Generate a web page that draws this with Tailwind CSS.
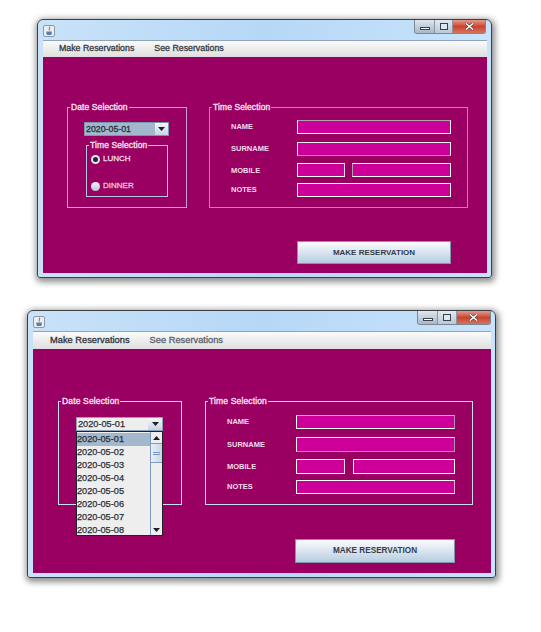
<!DOCTYPE html>
<html lang="en">
<head>
    <meta charset="UTF-8">
    <title>Reservations</title>
    <script src="https://cdn.jsdelivr.net/npm/@tailwindcss/browser@4"></script>
</head>
<body class="bg-white">
<div class="relative w-[541px] h-[632px] overflow-hidden font-['Liberation_Sans',sans-serif]">

    <!-- first window: radio panel -->
    <div class="absolute left-[37px] top-[19px] w-[455px] h-[259px] flex flex-col rounded-t-[6px] rounded-b-[3px] border border-[#3a3f44] bg-gradient-to-r from-[#c9e2f8] via-[#b6d8f7] to-[#c8e3fb] shadow-[1px_2px_6px_2px_rgba(0,0,0,0.45)]">
        <div class="h-[20px] shrink-0 flex items-center justify-between pl-[5px] pr-[5px]">
            <div class="w-[12px] h-[12px] mt-[1px] flex items-center justify-center rounded-[2px] border border-[#8d9aa6] bg-[#e8eef4]">
                <svg width="9" height="10" viewBox="0 0 10 11"><path d="M5 0.5C6 2 3.8 3 5 5" stroke="#d9641e" fill="none" stroke-width="1.2"/><path d="M1.5 6h6v2.5c0 1-1 1.5-1.5 1.5H3c-.5 0-1.5-.5-1.5-1.5z" fill="#5a7fa8"/></svg>
            </div>
            <div class="flex h-[14px] w-[72px] self-start rounded-b-[3px] border border-t-0 border-[#7b8794] overflow-hidden">
                <div class="w-[20px] flex items-center justify-center border-r border-[#8a96a2] bg-gradient-to-b from-[#dfe7ef] to-[#a9b7c6]"><div class="w-[10px] h-[3px] mt-[4px] border border-[#39424c] bg-white"></div></div>
                <div class="w-[18px] flex items-center justify-center border-r border-[#8a96a2] bg-gradient-to-b from-[#dfe9f2] to-[#b9c9d8]"><div class="w-[8px] h-[7px] border border-[#39424c] bg-[#dfe7ee]"></div></div>
                <div class="flex-1 flex items-center justify-center bg-gradient-to-b from-[#e39a8c] via-[#c9442f] to-[#d8705c]">
                    <svg width="9" height="7" viewBox="0 0 9 7"><path d="M1 .5l7 6M8 .5l-7 6" stroke="#39424c" stroke-width="2.6"/><path d="M1 .5l7 6M8 .5l-7 6" stroke="#fff" stroke-width="1.5"/></svg>
                </div>
            </div>
        </div>
        <div class="flex-1 ml-[5px] mr-[4px] mb-[4px] flex flex-col border-t border-[#8ea4ba]">
            <div class="h-[16px] shrink-0 flex items-center gap-[20px] pl-[16px] bg-gradient-to-b from-[#fbfbfb] to-[#dedede] text-[#333a44] text-[8.8px] [-webkit-text-stroke:0.3px]">
                <span>Make Reservations</span>
                <span>See Reservations</span>
            </div>
            <div class="flex-1 bg-[#990061] pt-[50px] pl-[24px]">
                <div class="flex gap-[22px] h-[101px]">
                    <div class="relative w-[120px] shrink-0 border border-[#c8a0d0]">
                        <span class="absolute left-[2px] top-[-6px] px-[1px] leading-[11px] bg-[#990061] text-[#ffe6f6] text-[8.5px] [-webkit-text-stroke:0.3px] tracking-[0.1px]">Date Selection</span>
                        <div class="ml-[16px] mt-[14px] w-[85px] h-[14px] flex border border-[#7e95ad] bg-[#a3b8cc] text-[#26303a] text-[8.8px] [-webkit-text-stroke:0.3px] leading-[12px] pl-[1px]">
                            <span class="flex-1">2020-05-01</span>
                            <div class="w-[13px] flex items-center justify-center bg-gradient-to-b from-[#f5f8fb] to-[#c6d5e3]">
                                <svg width="7" height="4" viewBox="0 0 7 4"><path d="M0 0h7L3.5 4z" fill="#1c2128"/></svg>
                            </div>
                        </div>
                        <div class="relative ml-[18px] mt-[9px] w-[82px] h-[52px] border border-[#b4c8e0] pt-[7px] pl-[4px] text-[#f2dcec] text-[8px] [-webkit-text-stroke:0.3px]">
                            <span class="absolute left-[2px] top-[-6px] px-[1px] leading-[11px] bg-[#990061] text-[#ffe6f6] text-[8.5px] [-webkit-text-stroke:0.3px] tracking-[0.1px]">Time Selection</span>
                            <div class="flex items-center gap-[3px] h-[12px]">
                                <div class="w-[9px] h-[9px] rounded-full bg-[#dfe8f0] flex items-center justify-center"><div class="w-[5px] h-[5px] rounded-full bg-[#1f2a33]"></div></div>
                                <span>LUNCH</span>
                            </div>
                            <div class="flex items-center gap-[3px] h-[12px] mt-[15px]">
                                <div class="w-[9px] h-[9px] rounded-full bg-gradient-to-b from-[#f5f8fb] to-[#b4c6d8]"></div>
                                <span class="text-[#eec4dd]">DINNER</span>
                            </div>
                        </div>
                    </div>
                    <div class="relative w-[259px] shrink-0 border border-[#c080b8] pt-[12px] pl-[21px] text-[#f5dcec] text-[7.5px] font-bold">
                        <span class="absolute left-[2px] top-[-6px] px-[1px] leading-[11px] bg-[#990061] text-[#ffe6f6] text-[8.5px] font-normal [-webkit-text-stroke:0.3px] tracking-[0.1px]">Time Selection</span>
                        <div class="flex items-center h-[14px]">
                            <span class="w-[66px]">NAME</span>
                            <div class="w-[154px] h-[14px] bg-[#cc0099] border border-white border-t-[#b0a0b0]"></div>
                        </div>
                        <div class="flex items-center h-[14px] mt-[8px]">
                            <span class="w-[66px]">SURNAME</span>
                            <div class="w-[154px] h-[14px] bg-[#cc0099] border border-[#f0f0f0] border-b-[#b090b0]"></div>
                        </div>
                        <div class="flex items-center h-[14px] mt-[7px]">
                            <span class="w-[66px] pt-[1px]">MOBILE</span>
                            <div class="w-[48px] h-[14px] bg-[#cc0099] border border-white border-r-[#d8d8e0]"></div>
                            <div class="w-[99px] h-[14px] ml-[7px] bg-[#cc0099] border border-white border-l-[#b0a0b0]"></div>
                        </div>
                        <div class="flex items-center h-[14px] mt-[6px]">
                            <span class="w-[66px]">NOTES</span>
                            <div class="w-[154px] h-[14px] bg-[#cc0099] border border-white"></div>
                        </div>
                    </div>
                </div>
                <button class="block mt-[33px] ml-[230px] w-[154px] h-[23px] border border-[#7f96ad] bg-gradient-to-b from-[#fbfcfe] to-[#b8cde0] text-[#333c48] text-[8px] font-bold">MAKE RESERVATION</button>
            </div>
        </div>
    </div>

    <!-- second window: combo box open -->
    <div class="absolute left-[27px] top-[310px] w-[469px] h-[268px] flex flex-col rounded-t-[6px] rounded-b-[3px] border border-[#3a3f44] bg-gradient-to-r from-[#c9e2f8] via-[#b6d8f7] to-[#c8e3fb] shadow-[1px_2px_6px_2px_rgba(0,0,0,0.45)]">
        <div class="h-[20px] shrink-0 flex items-center justify-between pl-[5px] pr-[4px]">
            <div class="w-[12px] h-[12px] mt-[1px] flex items-center justify-center rounded-[2px] border border-[#8d9aa6] bg-[#e8eef4]">
                <svg width="9" height="10" viewBox="0 0 10 11"><path d="M5 0.5C6 2 3.8 3 5 5" stroke="#d9641e" fill="none" stroke-width="1.2"/><path d="M1.5 6h6v2.5c0 1-1 1.5-1.5 1.5H3c-.5 0-1.5-.5-1.5-1.5z" fill="#5a7fa8"/></svg>
            </div>
            <div class="flex h-[14px] w-[74px] self-start rounded-b-[3px] border border-t-0 border-[#7b8794] overflow-hidden">
                <div class="w-[20px] flex items-center justify-center border-r border-[#8a96a2] bg-gradient-to-b from-[#dfe7ef] to-[#a9b7c6]"><div class="w-[10px] h-[3px] mt-[4px] border border-[#39424c] bg-white"></div></div>
                <div class="w-[19px] flex items-center justify-center border-r border-[#8a96a2] bg-gradient-to-b from-[#dfe9f2] to-[#b9c9d8]"><div class="w-[8px] h-[7px] border border-[#39424c] bg-[#dfe7ee]"></div></div>
                <div class="flex-1 flex items-center justify-center bg-gradient-to-b from-[#e39a8c] via-[#c9442f] to-[#d8705c]">
                    <svg width="9" height="7" viewBox="0 0 9 7"><path d="M1 .5l7 6M8 .5l-7 6" stroke="#39424c" stroke-width="2.6"/><path d="M1 .5l7 6M8 .5l-7 6" stroke="#fff" stroke-width="1.5"/></svg>
                </div>
            </div>
        </div>
        <div class="flex-1 ml-[5px] mr-[4px] mb-[4px] flex flex-col border-t border-[#8ea4ba]">
            <div class="h-[17px] shrink-0 flex items-center gap-[20px] pl-[17px] bg-gradient-to-b from-[#fbfbfb] to-[#dedede] text-[9.3px] [-webkit-text-stroke:0.3px]">
                <span class="text-[#2b323c]">Make Reservations</span>
                <span class="text-[#59616c]">See Reservations</span>
            </div>
            <div class="flex-1 bg-[#990061] pt-[52px] pl-[25px]">
                <div class="flex gap-[23px] h-[104px]">
                    <div class="relative w-[124px] shrink-0 border border-[#c4e0f0]">
                        <span class="absolute left-[2px] top-[-6px] px-[1px] leading-[11px] bg-[#990061] text-[#ffe6f6] text-[8.5px] [-webkit-text-stroke:0.3px] tracking-[0.15px]">Date Selection</span>
                        <div class="relative z-10 ml-[17px] mt-[15px] w-[87px]">
                            <div class="h-[14px] flex border border-[#8ea3b8] bg-[#eeeeee] text-[#2a2f36] text-[9.2px] [-webkit-text-stroke:0.25px] leading-[12px] pl-[1px]">
                                <span class="flex-1">2020-05-01</span>
                                <div class="w-[14px] flex items-center justify-center bg-gradient-to-b from-[#f5f8fb] to-[#c6d5e3]">
                                    <svg width="7" height="4" viewBox="0 0 7 4"><path d="M0 0h7L3.5 4z" fill="#1c2128"/></svg>
                                </div>
                            </div>
                            <div class="h-[105px] flex border border-[#20242a] bg-[#eeeeee] text-[#2a2f36] text-[9.2px] [-webkit-text-stroke:0.25px]">
                                <ul class="flex-1 pt-[1px] leading-[13px]">
                                    <li class="bg-[#a3b8cc]">2020-05-01</li>
                                    <li>2020-05-02</li>
                                    <li>2020-05-03</li>
                                    <li>2020-05-04</li>
                                    <li>2020-05-05</li>
                                    <li>2020-05-06</li>
                                    <li>2020-05-07</li>
                                    <li>2020-05-08</li>
                                </ul>
                                <div class="w-[12px] flex flex-col border-l border-[#7f9ac0] bg-[#eeeeee]">
                                    <div class="h-[11px] flex items-center justify-center"><svg width="7" height="4" viewBox="0 0 7 4"><path d="M0 4h7L3.5 0z" fill="#1c2128"/></svg></div>
                                    <div class="h-[20px] flex flex-col items-center justify-center gap-[1px] border-y border-[#7f9ac0] bg-gradient-to-r from-[#e8f0f8] to-[#c4d6ea]"><div class="w-[7px] h-px bg-[#7f9ac0]"></div><div class="w-[7px] h-px bg-[#7f9ac0]"></div></div>
                                    <div class="flex-1"></div>
                                    <div class="h-[11px] flex items-center justify-center"><svg width="7" height="4" viewBox="0 0 7 4"><path d="M0 0h7L3.5 4z" fill="#1c2128"/></svg></div>
                                </div>
                            </div>
                        </div>
                    </div>
                    <div class="relative w-[268px] shrink-0 border border-[#c4e0f0] pt-[13px] pl-[21px] text-[#f5dcec] text-[7.5px] font-bold">
                        <span class="absolute left-[2px] top-[-6px] px-[1px] leading-[11px] bg-[#990061] text-[#ffe6f6] text-[8.5px] font-normal [-webkit-text-stroke:0.3px] tracking-[0.15px]">Time Selection</span>
                        <div class="flex items-center h-[14px]">
                            <span class="w-[69px]">NAME</span>
                            <div class="w-[159px] h-[14px] bg-[#cc0099] border border-white border-r-[#b090b0] border-t-[#c8b0c8]"></div>
                        </div>
                        <div class="flex items-center h-[15px] mt-[8px]">
                            <span class="w-[69px]">SURNAME</span>
                            <div class="w-[159px] h-[15px] bg-[#cc0099] border border-[#f0f0f0] border-b-[#b090b0] border-r-[#b090b0]"></div>
                        </div>
                        <div class="flex items-center h-[15px] mt-[7px]">
                            <span class="w-[69px]">MOBILE</span>
                            <div class="w-[49px] h-[15px] bg-[#cc0099] border border-white border-r-[#d8d8e0]"></div>
                            <div class="w-[102px] h-[15px] ml-[8px] bg-[#cc0099] border border-white"></div>
                        </div>
                        <div class="flex items-center h-[14px] mt-[6px]">
                            <span class="w-[69px]">NOTES</span>
                            <div class="w-[159px] h-[14px] bg-[#cc0099] border border-white border-r-[#d8b0d0]"></div>
                        </div>
                    </div>
                </div>
                <button class="block mt-[34px] ml-[237px] w-[160px] h-[24px] border border-[#7f96ad] bg-gradient-to-b from-[#fbfcfe] to-[#b8cde0] text-[#333c48] text-[8.2px] font-bold">MAKE RESERVATION</button>
            </div>
        </div>
    </div>
</div>
</body>
</html>
